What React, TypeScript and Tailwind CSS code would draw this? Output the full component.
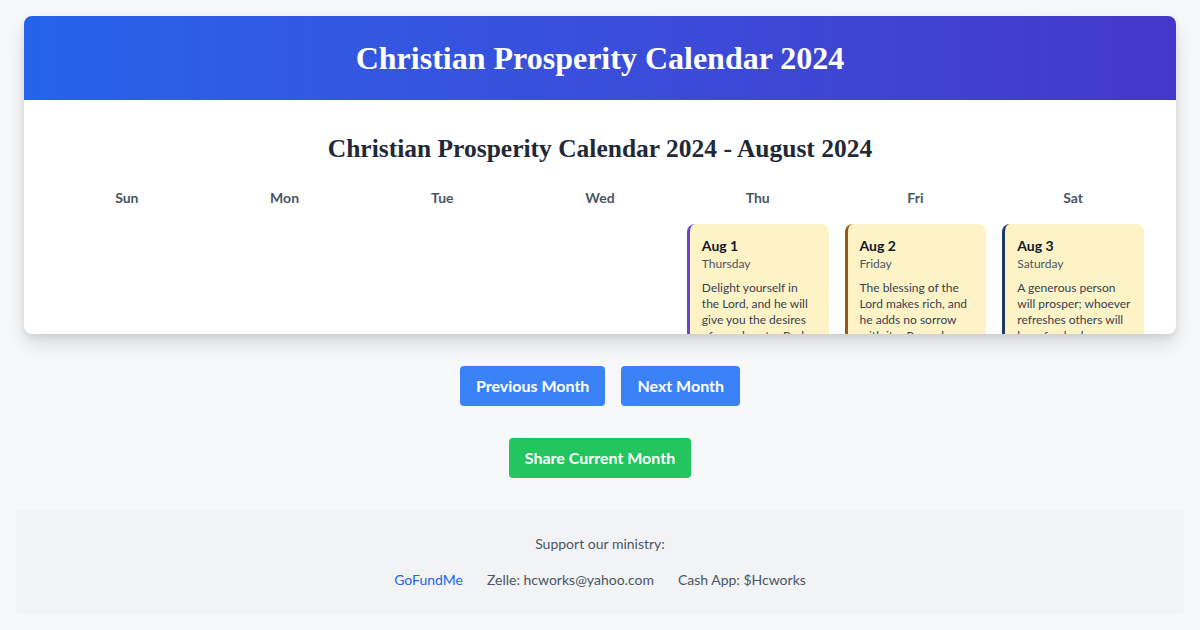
import React from "react";

const days = ["Sun", "Mon", "Tue", "Wed", "Thu", "Fri", "Sat"];

const entries = [
  {
    date: "Aug 1",
    day: "Thursday",
    verse: "Delight yourself in the Lord, and he will give you the desires of your heart. - Psalm 37:4",
    border: "border-[#6b46c1]",
  },
  {
    date: "Aug 2",
    day: "Friday",
    verse: "The blessing of the Lord makes rich, and he adds no sorrow with it. - Proverbs 10:22",
    border: "border-[#975a16]",
  },
  {
    date: "Aug 3",
    day: "Saturday",
    verse: "A generous person will prosper; whoever refreshes others will be refreshed. - Proverbs 11:25",
    border: "border-[#1e3a5f]",
  },
];

export default function App() {
  const serif = { fontFamily: '"Liberation Serif", "DejaVu Serif", serif' };
  return (
    <div
      className="min-h-[630px] bg-[#f7f8fa] p-4 text-gray-800"
      style={{ fontFamily: 'Lato, "Noto Sans", sans-serif' }}
    >
      <div className="mx-2 h-[318px] overflow-hidden rounded-lg bg-white shadow-[0_10px_20px_rgba(0,0,0,0.12),0_3px_6px_rgba(0,0,0,0.08)]">
        <div className="flex h-[84px] items-center justify-center bg-gradient-to-r from-[#2563eb] to-[#4338ca]">
          <h1 className="text-[32px] font-bold leading-none text-white" style={serif}>
            Christian Prosperity Calendar 2024
          </h1>
        </div>
        <div className="px-8 pt-8">
          <h2 className="text-center text-[25.5px] font-bold leading-[34px] text-[#1f2937]" style={serif}>
            Christian Prosperity Calendar 2024 - August 2024
          </h2>
          <div className="mt-[22px] grid grid-cols-7 gap-4">
            {days.map((d) => (
              <div key={d} className="text-center text-sm font-bold leading-5 text-gray-600">
                {d}
              </div>
            ))}
            {[0, 1, 2, 3].map((i) => (
              <div key={"e" + i} />
            ))}
            {entries.map((e) => (
              <div
                key={e.date}
                className={`rounded-lg border-l-[3px] ${e.border} bg-[#fef3c7] p-3`}
              >
                <div className="text-sm font-bold leading-5 text-gray-900">{e.date}</div>
                <div className="text-xs leading-4 text-gray-600">{e.day}</div>
                <div className="mt-2 text-xs leading-4 text-gray-700">{e.verse}</div>
              </div>
            ))}
          </div>
        </div>
      </div>

      <div className="mt-8 flex justify-center gap-4">
        <button className="h-10 rounded bg-[#3b82f6] px-4 text-base font-bold text-white">
          Previous Month
        </button>
        <button className="h-10 rounded bg-[#3b82f6] px-4 text-base font-bold text-white">
          Next Month
        </button>
      </div>
      <div className="mt-8 flex justify-center">
        <button className="h-10 rounded bg-[#22c55e] px-4 text-base font-bold text-white">
          Share Current Month
        </button>
      </div>

      <div className="mt-8 flex h-[104px] flex-col items-center justify-center rounded bg-[#f1f3f5]">
        <div className="text-sm leading-5 text-gray-600">Support our ministry:</div>
        <div className="mt-4 flex gap-6 text-sm leading-5 text-gray-600">
          <span className="text-[#2563eb]">GoFundMe</span>
          <span>Zelle: hcworks@yahoo.com</span>
          <span>Cash App: $Hcworks</span>
        </div>
      </div>
    </div>
  );
}
